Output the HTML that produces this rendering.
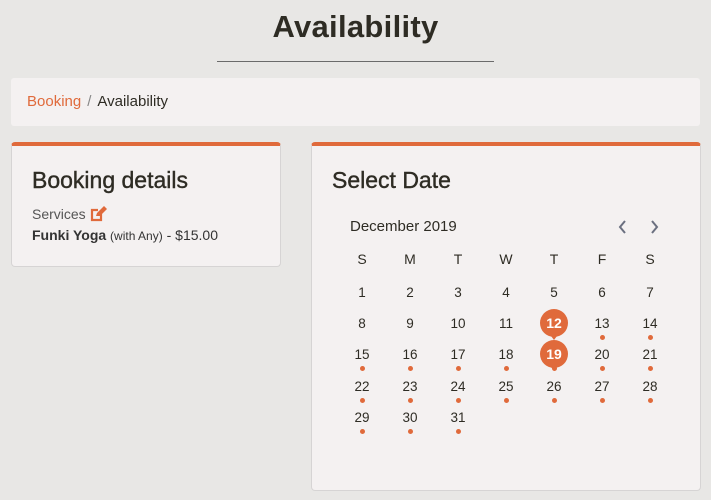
<!DOCTYPE html>
<html><head><meta charset="utf-8"><style>
*{margin:0;padding:0;box-sizing:border-box}
body{width:711px;height:500px;background:#e8e7e5;font-family:"Liberation Sans",sans-serif;color:#2e2c24;position:relative;overflow:hidden}
.title{position:absolute;top:9px;left:0;width:711px;text-align:center;font-size:31px;font-weight:bold;letter-spacing:0.3px}
.line{position:absolute;top:61px;left:217px;width:277px;height:1px;background:#6b6b6b}
.bc{position:absolute;left:11px;top:78px;width:689px;height:48px;background:#f4f1f1;border-radius:3px;font-size:15px;padding:15px 16px}
.bc .o{color:#e06a3b}
.bc .s{color:#888;margin:0 6px}
.card{position:absolute;background:#f4f1f1;border:1px solid #d6d4d4;border-top:4px solid #e06a3b;border-radius:4px}
h2{font-size:23px;font-weight:normal;position:absolute;-webkit-text-stroke:0.4px #2e2c24}
.d{position:absolute;width:40px;margin-left:-20px;text-align:center;font-size:13.5px}
.dot{position:absolute;width:5px;height:5px;border-radius:50%;background:#e06a3b;margin-left:-2.5px}
.sel{position:absolute;width:28px;height:28px;margin-left:-14px;border-radius:50%;background:#e06a3b;color:#fff;font-weight:bold;font-size:14px;text-align:center;line-height:28px}
.sel:after{content:"";position:absolute;left:11px;bottom:-3px;border:3px solid transparent;border-top:4px solid #e06a3b;border-bottom:0}
</style></head><body>
<div class="title">Availability</div>
<div class="line"></div>
<div class="bc"><span class="o">Booking</span><span class="s">/</span>Availability</div>
<div class="card" style="left:11px;top:142px;width:270px;height:125px">
<h2 style="left:20px;top:21px">Booking details</h2>
<div style="position:absolute;left:20px;top:59px;font-size:14px;color:#555">Services <svg width="18" height="17" viewBox="0 0 18 17" style="vertical-align:-3px"><path d="M11 9v6H2V5h6" fill="none" stroke="#e06a3b" stroke-width="2.2"/><path d="M6 11l1-3 7-7 3 3-7 7z" fill="#e06a3b"/></svg></div>
<div style="position:absolute;left:20px;top:81px;font-size:14px;color:#333"><b>Funki Yoga</b> <span style="font-size:12px">(with Any)</span> - $15.00</div>
</div>
<div class="card" style="left:311px;top:142px;width:390px;height:349px">
<h2 style="left:20px;top:21px">Select Date</h2>
<div style="position:absolute;left:38px;top:72px;font-size:15px">December 2019</div>
<svg style="position:absolute;left:305px;top:73px" width="50" height="16"><path d="M8 2 3 8l5 6M35 2l5 6-5 6" fill="none" stroke="#6b7080" stroke-width="2"/></svg>
</div>
<div id="cal"></div>
<script>
var xs=[362,410,458,506,554,602,650],h="",hd="SMTWTFS";
for(var i=0;i<7;i++)h+='<div class="d" style="left:'+xs[i]+'px;top:251px;font-size:14px">'+hd[i]+'</div>';
var ys=[285,316,347,379,410];
for(var n=1;n<=31;n++){var p=n-1,c=p%7,r=Math.floor(p/7),x=xs[c],y=ys[r];
if(n==12||n==19){h+='<div class="sel" style="left:'+x+'px;top:'+(y-7)+'px">'+n+'</div>';}
else h+='<div class="d" style="left:'+x+'px;top:'+y+'px">'+n+'</div>';
if(n>=13)h+='<div class="dot" style="left:'+x+'px;top:'+(y+19)+'px"></div>';}
document.getElementById('cal').innerHTML=h;
</script>
</body></html>
